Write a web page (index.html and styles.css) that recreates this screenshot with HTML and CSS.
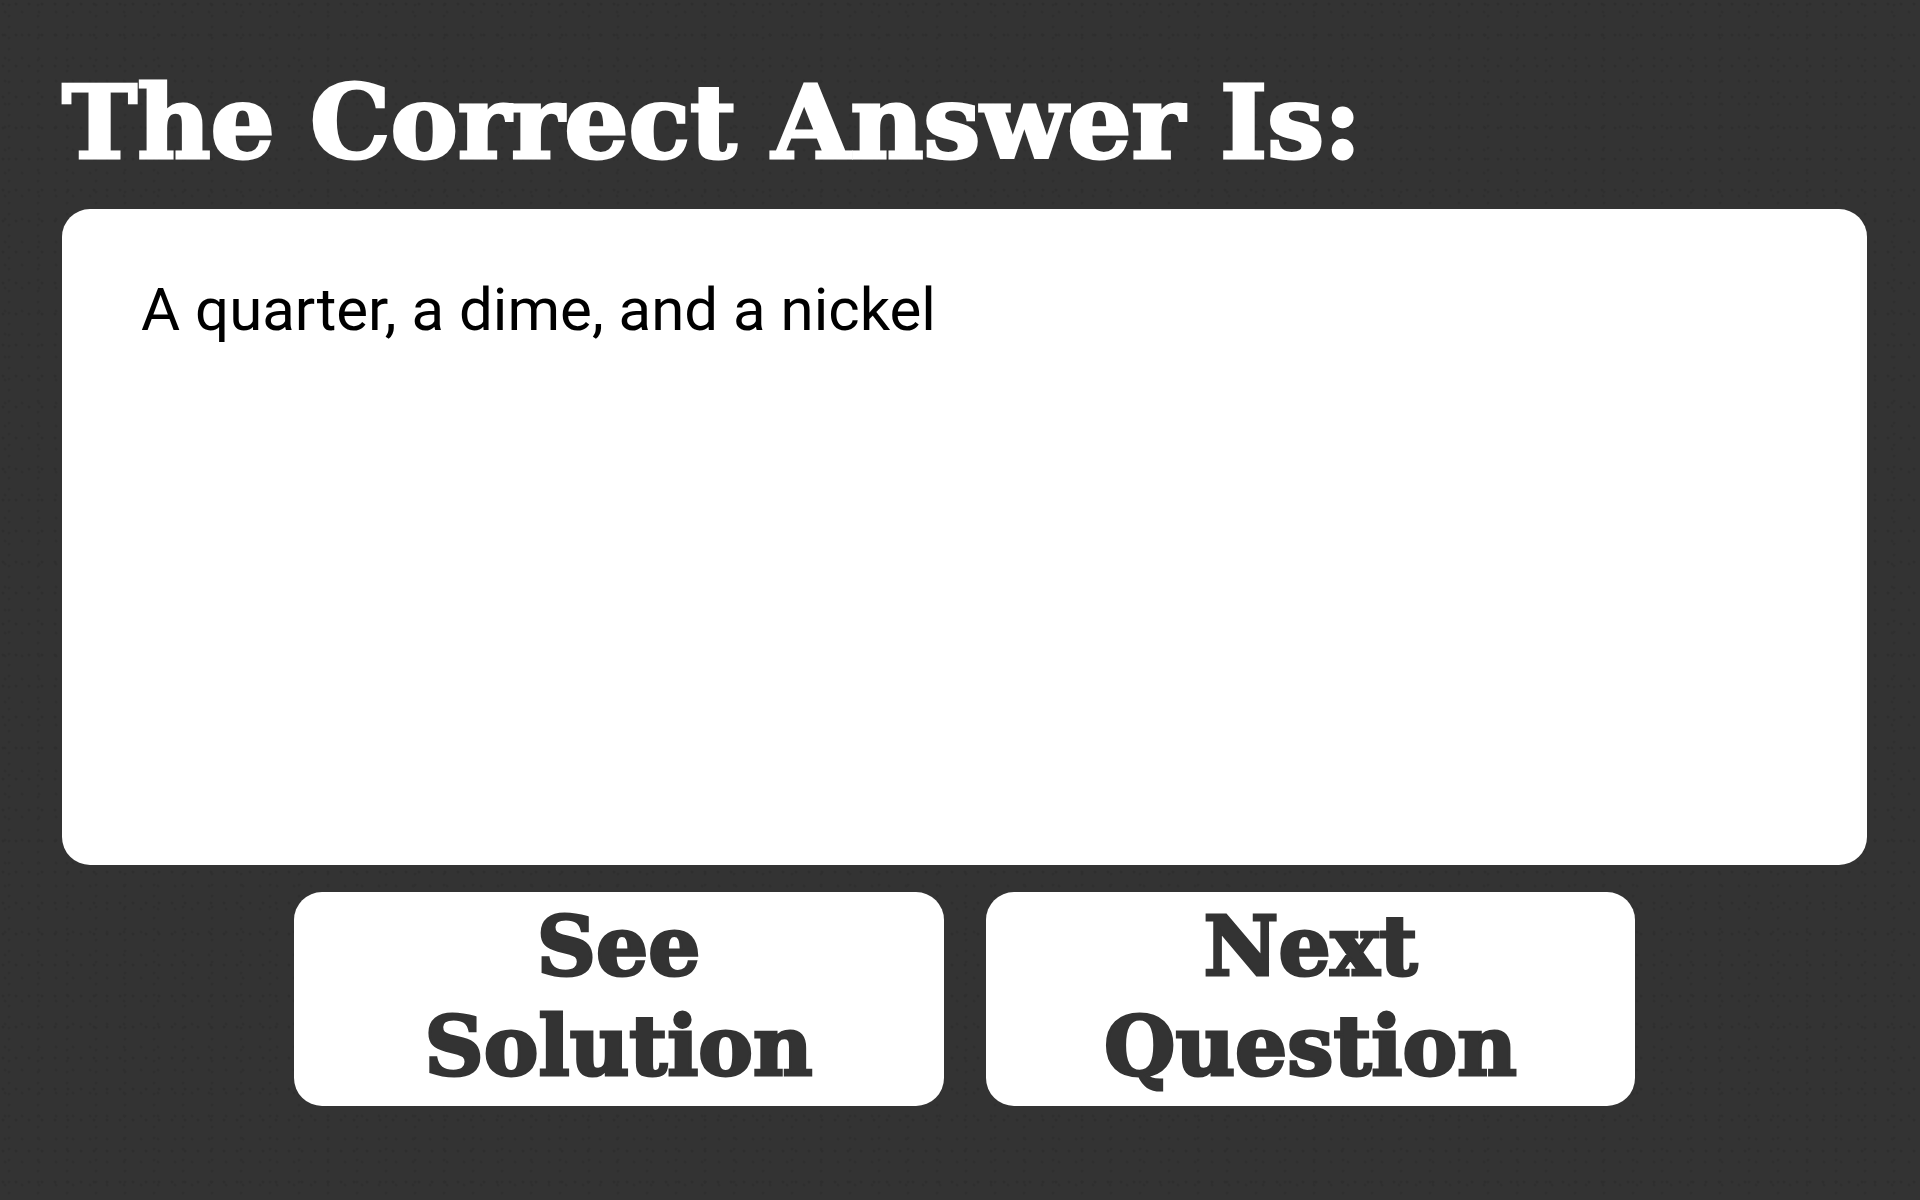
FILE: index.html
```html
<!DOCTYPE html>
<html lang="en">
<head>
<meta charset="utf-8">
<meta name="viewport" content="width=device-width, initial-scale=1">
<title>The Correct Answer Is</title>
<link rel="stylesheet" href="styles.css">
</head>
<body>
<main class="screen">
  <h1 class="title">The Correct Answer Is:</h1>
  <section class="card">
    <p class="answer">A quarter, a dime, and a nickel</p>
  </section>
  <div class="actions">
    <button class="action" type="button">See<br>Solution</button>
    <button class="action" type="button">Next<br>Question</button>
  </div>
</main>
</body>
</html>
```
FILE: styles.css
```css
* {
  box-sizing: border-box;
}

body {
  margin: 0;
  background-color: #333;
  /* fine speckle, built from dot grids whose periods do not line up */
  background-image:
    radial-gradient(circle at 3px 4px, #2e2e2e 1px, transparent 2px),
    radial-gradient(circle at 9px 5px, #2f2f2f 1px, transparent 2px),
    radial-gradient(circle at 5px 12px, #2f2f2f 1px, transparent 2px);
  background-size: 13px 31px, 29px 11px, 17px 23px;
}

.screen {
  display: flex;
  flex-direction: column;
  min-height: 100vh;
  padding: 65px 53px 94px 62px;
}

.title {
  margin: 0;
  color: #fff;
  font: bold 101px/116px "DejaVu Serif", serif;
  -webkit-text-stroke: 3px #fff;
}

.card {
  flex: 1;
  margin-top: 28px;
  padding: 64px 79px;
  border-radius: 28px;
  background: #fff;
}

.answer {
  margin: 0;
  color: #000;
  font: 60px/74px Roboto, sans-serif;
}

.actions {
  display: flex;
  justify-content: center;
  gap: 42px;
  margin-top: 27px;
}

.action {
  width: 36%;
  padding: 4px 16px 10px;
  border: 0;
  border-radius: 28px;
  background: #fff;
  color: #333;
  font: bold 82px/100px "DejaVu Serif", serif;
  -webkit-text-stroke: 3px #333;
  cursor: pointer;
}
```
